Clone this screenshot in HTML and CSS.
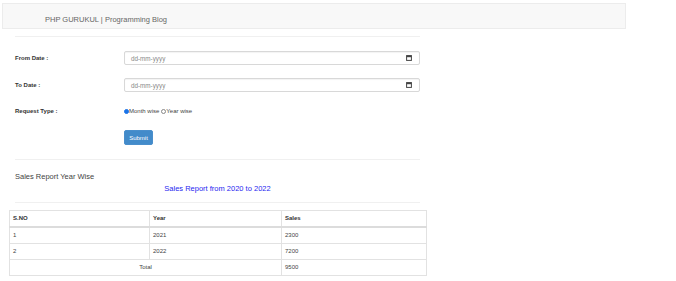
FILE: index.html
```html
<!DOCTYPE html>
<html lang="en">
<head>
<meta charset="utf-8">
<title>Sales Report Year Wise</title>
<link rel="stylesheet" href="styles.css">
</head>
<body>
<nav class="navbar">
  <a class="brand" href="#">PHP GURUKUL | Programming Blog</a>
</nav>
<main class="container">
  <hr class="rule rule-top">
  <form class="report-form">
    <div class="form-row row-from">
      <label class="form-label">From Date :</label>
      <div class="date-input">
        <span class="date-text">dd-mm-yyyy</span>
        <svg class="cal-icon" width="6" height="6" viewBox="0 0 6 6"><rect x="0.6" y="0.6" width="4.8" height="4.8" fill="none" stroke="#444" stroke-width="1"/><rect x="0.6" y="0.6" width="4.8" height="1.6" fill="#444"/></svg>
      </div>
    </div>
    <div class="form-row row-to">
      <label class="form-label">To Date :</label>
      <div class="date-input">
        <span class="date-text">dd-mm-yyyy</span>
        <svg class="cal-icon" width="6" height="6" viewBox="0 0 6 6"><rect x="0.6" y="0.6" width="4.8" height="4.8" fill="none" stroke="#444" stroke-width="1"/><rect x="0.6" y="0.6" width="4.8" height="1.6" fill="#444"/></svg>
      </div>
    </div>
    <div class="form-row row-type">
      <label class="form-label">Request Type :</label>
      <div class="radios">
        <input class="radio" type="radio" name="type" checked><span class="radio-text">Month wise</span>
        <input class="radio radio-second" type="radio" name="type"><span class="radio-text">Year wise</span>
      </div>
    </div>
    <div class="form-row row-submit">
      <span class="form-label"></span>
      <button class="btn" type="button">Submit</button>
    </div>
  </form>
  <hr class="rule rule-mid">
  <h4 class="section-title">Sales Report Year Wise</h4>
  <p class="report-caption">Sales Report from 2020 to 2022</p>
  <hr class="rule rule-bottom">
  <table class="sales-table">
    <thead>
      <tr><th class="c1">S.NO</th><th class="c2">Year</th><th>Sales</th></tr>
    </thead>
    <tbody>
      <tr><td>1</td><td>2021</td><td>2300</td></tr>
      <tr><td>2</td><td>2022</td><td>7200</td></tr>
      <tr><td colspan="2" class="total">Total</td><td>9500</td></tr>
    </tbody>
  </table>
</main>
</body>
</html>
```

FILE: styles.css
```css
* { box-sizing: border-box; }

body {
  margin: 0;
  font-family: "Liberation Sans", Arial, sans-serif;
  color: #333;
  background: #fff;
}

.navbar {
  margin: 3px 0 0 2px;
  width: 624px;
  height: 26px;
  background: #f8f8f8;
  border: 1px solid #ececec;
  padding: 11px 0 0 42px;
}

.brand {
  display: block;
  font-size: 7.5px;
  line-height: 9px;
  color: #666;
  text-decoration: none;
}

.container {
  margin-left: 15px;
  width: 405px;
}

.rule {
  margin: 0;
  border: 0;
  border-top: 1px solid #f0f0f0;
}

.rule-top { margin-top: 7px; }

.form-row {
  display: flex;
  align-items: center;
  height: 14px;
}

.row-from { margin-top: 14px; }
.row-to { margin-top: 13px; }
.row-type { margin-top: 12px; }
.row-submit { margin-top: 12px; height: 15px; }

.form-label {
  width: 109px;
  flex: none;
  font-size: 6px;
  font-weight: bold;
  color: #333;
}

.date-input {
  flex: 1;
  height: 14px;
  display: flex;
  align-items: center;
  justify-content: space-between;
  padding: 0 7px 0 6px;
  border: 1px solid #d8d8d8;
  border-radius: 2px;
  box-shadow: inset 0 1px 1px rgba(0,0,0,0.05);
  background: #fff;
}

.date-text {
  font-size: 6.3px;
  color: #888;
}

.cal-icon { display: block; }

.radios {
  display: flex;
  align-items: center;
  font-size: 6px;
  color: #444;
}

.radio {
  -webkit-appearance: none;
  appearance: none;
  width: 5px;
  height: 5px;
  margin: 0;
  border: 1px solid #888;
  border-radius: 50%;
  background: #fff;
}

.radio:checked {
  background: #1a73e8;
  border-color: #1a73e8;
}

.radio-second { margin-left: 2px; }

.btn {
  width: 29px;
  height: 15px;
  padding: 0;
  font-family: inherit;
  font-size: 6px;
  color: #fff;
  background: #428bca;
  border: 1px solid #4a8fcc;
  border-radius: 2px;
}

.rule-mid { margin-top: 14px; }

.section-title {
  margin: 12px 0 0;
  font-size: 7.5px;
  line-height: 9px;
  font-weight: normal;
  color: #444;
}

.report-caption {
  margin: 3px 0 0;
  font-size: 7.5px;
  line-height: 9px;
  text-align: center;
  color: #2727f0;
}

.rule-bottom { margin-top: 9px; }

.sales-table {
  margin: 7px 0 0 -6px;
  width: 418px;
  border-collapse: collapse;
  border: 1px solid #e2e2e2;
  font-size: 6px;
  color: #444;
}

.sales-table th,
.sales-table td {
  border: 1px solid #e2e2e2;
  padding: 4px 3px;
  line-height: 7px;
  text-align: left;
}

.sales-table th {
  font-weight: bold;
  color: #333;
  border-bottom: 2px solid #dcdcdc;
}

.sales-table .c1 { width: 140px; }
.sales-table .c2 { width: 132px; }

.sales-table td.total { text-align: center; }
```
